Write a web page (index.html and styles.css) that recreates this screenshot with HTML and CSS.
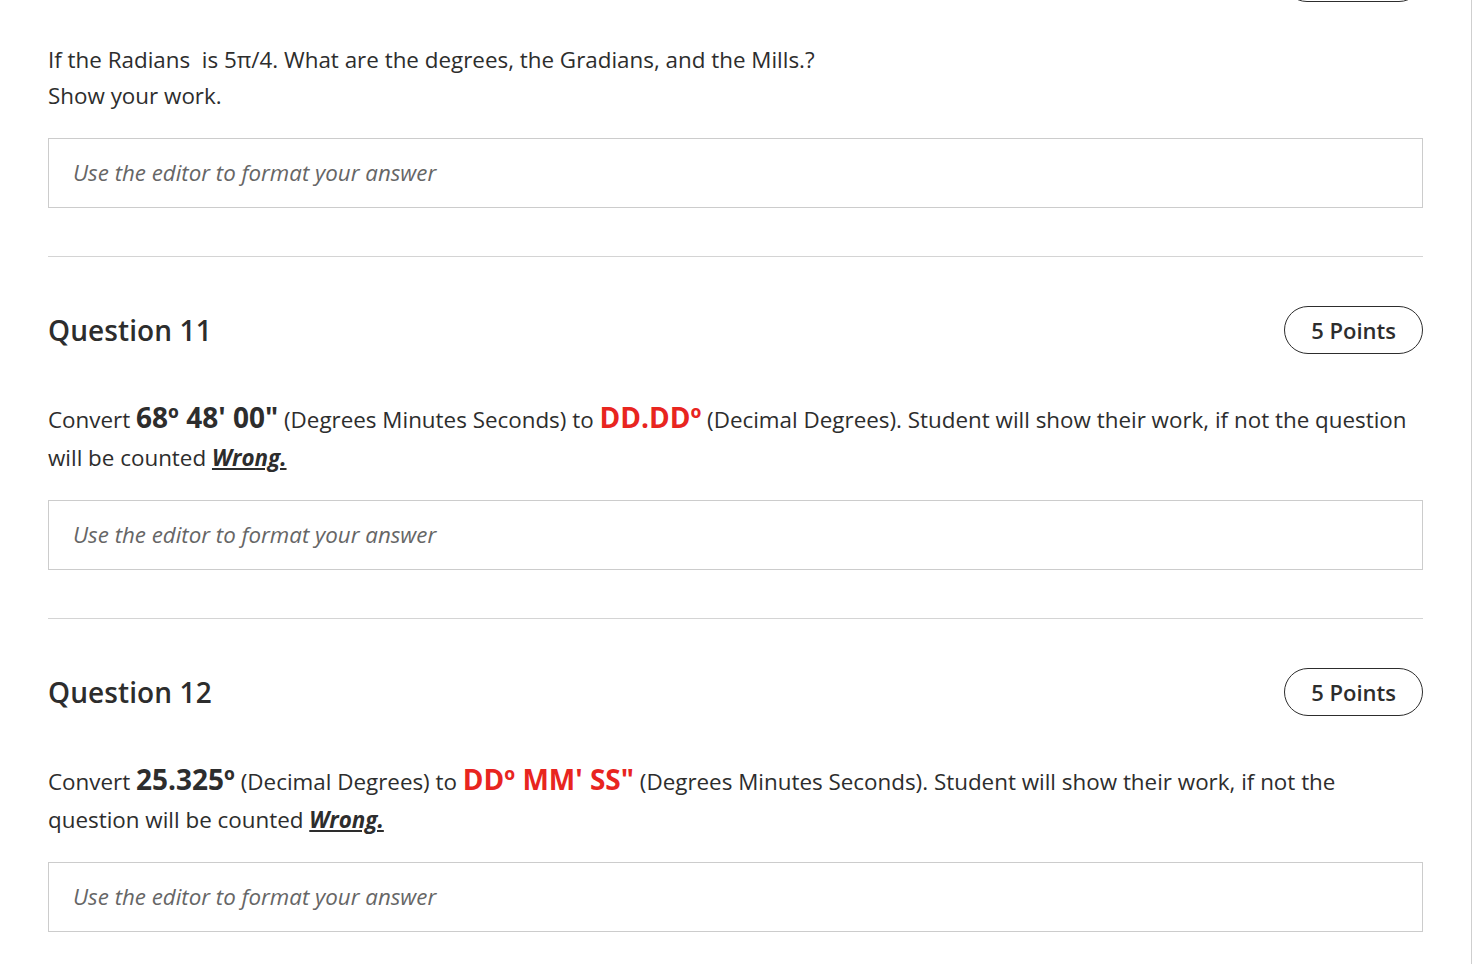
FILE: index.html
```html
<!DOCTYPE html>
<html>
<head>
<meta charset="utf-8">
<link rel="stylesheet" href="styles.css">
</head>
<body>
<div class="page">
  <div class="prev-head"><span class="badge prev-badge"></span></div>
  <section class="question first">
    <p class="prompt plain">If the Radians&nbsp; is 5π/4. What are the degrees, the Gradians, and the Mills.?<br>Show your work.</p>
    <div class="answer">Use the editor to format your answer</div>
  </section>
  <section class="question">
    <div class="q-head">
      <h2 class="q-title">Question 11</h2>
      <span class="badge">5 Points</span>
    </div>
    <p class="prompt">Convert <b class="big">68º 48' 00"</b> (Degrees Minutes Seconds) to <b class="big red">DD.DDº</b> (Decimal Degrees). Student will show their work, if not the question will be counted <b class="wrong">Wrong.</b></p>
    <div class="answer">Use the editor to format your answer</div>
  </section>
  <section class="question">
    <div class="q-head">
      <h2 class="q-title">Question 12</h2>
      <span class="badge">5 Points</span>
    </div>
    <p class="prompt">Convert <b class="big">25.325º</b> (Decimal Degrees) to <b class="big red">DDº MM' SS"</b> (Degrees Minutes Seconds). Student will show their work, if not the question will be counted <b class="wrong">Wrong.</b></p>
    <div class="answer">Use the editor to format your answer</div>
  </section>
</div>
</body>
</html>
```

FILE: styles.css
```css
html, body {
  margin: 0;
  padding: 0;
  background: #fff;
}
body {
  font-family: "Open Sans", "Noto Sans", sans-serif;
  color: #2d2d2d;
  overflow: hidden;
}
.page {
  width: 1375px;
  padding: 0 48px 40px 48px;
  border-right: 1px solid #cfcfcf;
  min-height: 964px;
}
.prev-head {
  display: flex;
  justify-content: flex-end;
  height: 2px;
}
.prev-badge {
  margin-top: -46px;
  width: 140px;
}
.badge {
  display: inline-flex;
  align-items: center;
  justify-content: center;
  height: 48px;
  box-sizing: border-box;
  padding: 0 26px;
  border: 1px solid #2d2d2d;
  border-radius: 24px;
  font-size: 22px;
  font-weight: 600;
  color: #2d2d2d;
}
.question {
  border-bottom: 1px solid #d4d4d4;
  padding-bottom: 48px;
}
.question:last-child {
  border-bottom: none;
}
.question.first {
  padding-top: 40px;
}
.q-head {
  display: flex;
  justify-content: space-between;
  align-items: center;
  padding-top: 49px;
}
.q-title {
  margin: 0;
  font-size: 28px;
  font-weight: 600;
  line-height: 48px;
  letter-spacing: 0.1px;
}
.prompt {
  margin: 47px 0 23px 0;
  font-size: 22.4px;
  line-height: 38px;
}
.prompt.plain {
  margin: 0 0 24px 0;
  line-height: 36px;
}
.big {
  font-size: 28px;
  font-weight: 700;
  line-height: 1;
}
.red {
  color: #e8251f;
}
.wrong {
  font-style: italic;
  font-weight: 700;
  text-decoration: underline;
}
.answer {
  height: 70px;
  box-sizing: border-box;
  border: 1px solid #cccccc;
  padding: 0 24px 2px 24px;
  display: flex;
  align-items: center;
  font-size: 22.3px;
  font-style: italic;
  color: #666;
}
```
